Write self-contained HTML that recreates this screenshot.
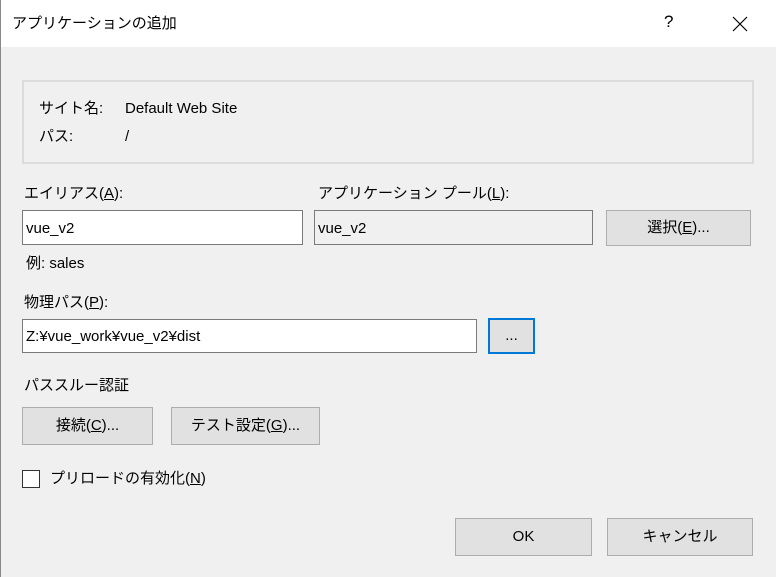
<!DOCTYPE html>
<html><head><meta charset="utf-8"><style>
*{box-sizing:border-box;margin:0;padding:0}
body{width:776px;height:577px;background:#f0f0f0;font-family:"Liberation Sans","Noto Sans CJK JP",sans-serif;font-size:15px;color:#000;position:relative;overflow:hidden}
.a{position:absolute;white-space:nowrap;line-height:18px}
.tb{position:absolute;left:0;top:0;width:776px;height:47px;background:#fff}
.box{position:absolute;border:2px solid #dcdcdc}
.in{position:absolute;border:1px solid #7a7a7a;background:#fff;padding-left:3px;padding-top:2px;line-height:31px}
.bt{position:absolute;border:1px solid #adadad;background:#e1e1e1;text-align:center}
u{text-decoration:underline}
</style></head><body>
<div class="tb"></div>
<div style="position:absolute;left:0;top:0;width:1px;height:577px;background:#888"></div>
<div class="a" style="left:12px;top:15px;font-size:15px">アプリケーションの追加</div>
<div class="a" style="left:664px;top:13px;font-size:17px">?</div>
<svg style="position:absolute;left:732px;top:16px" width="16" height="16"><path d="M1 1L15 15M15 1L1 15" stroke="#000" stroke-width="1.2"/></svg>
<div class="box" style="left:22px;top:80px;width:732px;height:84px"></div>
<div class="a" style="left:39px;top:100px">サイト名:</div>
<div class="a" style="left:125px;top:100px">Default Web Site</div>
<div class="a" style="left:39px;top:128px">パス:</div>
<div class="a" style="left:125px;top:128px">/</div>
<div class="a" style="left:24px;top:185px">エイリアス(<u>A</u>):</div>
<div class="a" style="left:318px;top:185px">アプリケーション プール(<u>L</u>):</div>
<div class="in" style="left:22px;top:210px;width:281px;height:35px">vue_v2</div>
<div class="in" style="left:314px;top:210px;width:279px;height:35px;background:#f0f0f0">vue_v2</div>
<div class="bt" style="left:606px;top:210px;width:145px;height:36px;line-height:34px">選択(<u>E</u>)...</div>
<div class="a" style="left:26px;top:255px">例: sales</div>
<div class="a" style="left:24px;top:294px">物理パス(<u>P</u>):</div>
<div class="in" style="left:22px;top:319px;width:455px;height:34px;line-height:30px">Z:¥vue_work¥vue_v2¥dist</div>
<div class="bt" style="left:488px;top:318px;width:47px;height:36px;line-height:32px;border:2px solid #0078d7">...</div>
<div class="a" style="left:24px;top:377px">パススルー認証</div>
<div class="bt" style="left:22px;top:407px;width:131px;height:38px;line-height:36px">接続(<u>C</u>)...</div>
<div class="bt" style="left:171px;top:407px;width:149px;height:38px;line-height:36px">テスト設定(<u>G</u>)...</div>
<div style="position:absolute;left:22px;top:470px;width:18px;height:18px;border:1px solid #333;background:#fff"></div>
<div class="a" style="left:50px;top:470px">プリロードの有効化(<u>N</u>)</div>
<div class="bt" style="left:455px;top:518px;width:137px;height:38px;line-height:36px">OK</div>
<div class="bt" style="left:607px;top:518px;width:146px;height:38px;line-height:36px">キャンセル</div>
</body></html>
